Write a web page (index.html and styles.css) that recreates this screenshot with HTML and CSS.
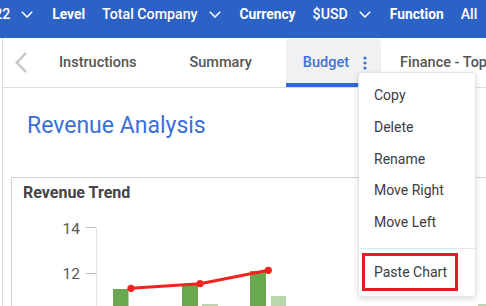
FILE: index.html
```html
<!DOCTYPE html>
<html lang="en">
<head>
<meta charset="utf-8">
<title>Revenue Analysis</title>
<link rel="stylesheet" href="styles.css">
</head>
<body>
<header class="topbar">
  <div class="filters">
    <span class="val">2022</span>
    <svg class="chev" width="12" height="7" viewBox="0 0 12 7"><polyline points="0.8,0.8 6,6 11.2,0.8" fill="none" stroke="#fff" stroke-width="1.5"/></svg>
    <span class="lbl">Level</span>
    <span class="val">Total Company</span>
    <svg class="chev" width="12" height="7" viewBox="0 0 12 7"><polyline points="0.8,0.8 6,6 11.2,0.8" fill="none" stroke="#fff" stroke-width="1.5"/></svg>
    <span class="lbl">Currency</span>
    <span class="val">$USD</span>
    <svg class="chev" width="12" height="7" viewBox="0 0 12 7"><polyline points="0.8,0.8 6,6 11.2,0.8" fill="none" stroke="#fff" stroke-width="1.5"/></svg>
    <span class="lbl">Function</span>
    <span class="val">All</span>
  </div>
</header>
<main class="workspace">
  <nav class="tabbar">
    <div class="scroll-left">
      <svg width="12" height="21" viewBox="0 0 12 21"><polyline points="11,1 1.8,10.5 11,20" fill="none" stroke="#cacaca" stroke-width="2.6"/></svg>
    </div>
    <div class="tab">Instructions</div>
    <div class="tab">Summary</div>
    <div class="tab tab-active">Budget
      <svg class="kebab" width="4" height="14" viewBox="0 0 4 14"><circle cx="2" cy="2" r="1.6" fill="#3c74da"/><circle cx="2" cy="7" r="1.6" fill="#3c74da"/><circle cx="2" cy="12" r="1.6" fill="#3c74da"/></svg>
    </div>
    <div class="tab tab-after-active">Finance - Top Line</div>
  </nav>
  <section class="content">
    <h1 class="page-title">Revenue Analysis</h1>
    <div class="card">
      <h2 class="card-title">Revenue Trend</h2>
      <svg class="chart" width="474" height="104" viewBox="12 202 474 104">
        <text x="80" y="234" class="axis-label" text-anchor="end">14</text>
        <text x="80" y="279" class="axis-label" text-anchor="end">12</text>
        <line x1="86" y1="227.5" x2="96" y2="227.5" stroke="#bdbdbd" stroke-width="1"/>
        <line x1="86" y1="273.5" x2="96" y2="273.5" stroke="#bdbdbd" stroke-width="1"/>
        <line x1="96.5" y1="227" x2="96.5" y2="306" stroke="#e4e4e4" stroke-width="1"/>
        <rect x="113" y="289" width="15.5" height="20" fill="#6aa84f"/>
        <rect x="182" y="285" width="16" height="24" fill="#6aa84f"/>
        <rect x="250" y="271" width="16" height="38" fill="#6aa84f"/>
        <rect x="202" y="304" width="16" height="5" fill="#b9d8aa"/>
        <rect x="271" y="296" width="15" height="13" fill="#b9d8aa"/>
        <rect x="478" y="304" width="10" height="5" fill="#b9d8aa"/>
        <polyline points="131,288.3 200,283.7 268.3,270.3" fill="none" stroke="#f2231d" stroke-width="3"/>
        <circle cx="131" cy="288.3" r="3.6" fill="#f2231d"/>
        <circle cx="200" cy="283.7" r="3.6" fill="#f2231d"/>
        <circle cx="268.3" cy="270.3" r="3.6" fill="#f2231d"/>
      </svg>
    </div>
  </section>
  <div class="menu">
    <div class="menu-item">Copy</div>
    <div class="menu-item">Delete</div>
    <div class="menu-item">Rename</div>
    <div class="menu-item">Move Right</div>
    <div class="menu-item">Move Left</div>
    <div class="menu-sep"></div>
    <div class="menu-item menu-item-highlight">Paste Chart</div>
  </div>
</main>
</body>
</html>
```
FILE: styles.css
```css
* { box-sizing: border-box; }
html, body { margin: 0; padding: 0; }
body {
  width: 486px;
  height: 306px;
  overflow: hidden;
  background: #fff;
  font-family: Roboto, "Liberation Sans", sans-serif;
}
.topbar {
  height: 38px;
  background: #2c62c5;
  color: #fff;
  overflow: hidden;
}
.filters {
  display: flex;
  align-items: center;
  height: 28px;
  margin-left: -22px;
  white-space: nowrap;
  font-size: 14.2px;
}
.filters .lbl { font-size: 13.8px; font-weight: 700; margin-left: 19px; margin-right: 17px; }
.filters .val { font-weight: 500; }
.filters .chev { margin-left: 11px; flex: none; }
.workspace {
  position: relative;
  margin-left: 2px;
  border-left: 1px solid #dcdcdc;
  height: 268px;
}
.tabbar {
  display: flex;
  height: 50px;
  border-bottom: 1px solid #dedede;
  white-space: nowrap;
}
.scroll-left {
  width: 39px;
  flex: none;
  display: flex;
  align-items: center;
  padding-left: 12px;
  padding-bottom: 1px;
}
.tab {
  display: flex;
  align-items: center;
  padding: 0 17px;
  font-size: 14.5px;
  font-weight: 500;
  color: #555;
  flex: none;
}
.tab + .tab { margin-left: 19px; }
.tab + .tab-active {
  margin-left: 17px;
  margin-top: 1px;
  padding-right: 9px;
  background: #f0f1f3;
  border-radius: 4px 4px 0 0;
  color: #3c74da;
  box-shadow: inset 0 -4px 0 #2f6bd6;
  padding-bottom: 1px;
}
.tab-active .kebab { margin-left: 14px; margin-right: 5px; }
.tab + .tab-after-active { margin-left: 2px; }
.content {
  padding-left: 8px;
}
.page-title {
  margin: 24px 0 0 16px;
  font-size: 23px;
  line-height: 28px;
  font-weight: 400;
  color: #3a70db;
}
.card {
  margin-top: 37px;
  margin-right: -20px;
  border: 1px solid #d3d3d3;
  border-bottom: none;
  height: 140px;
  padding: 6px 0 0 11px;
}
.card-title {
  margin: 0;
  font-size: 16px;
  line-height: 18px;
  font-weight: 700;
  color: #454545;
}
.chart {
  display: block;
  margin-left: -11px;
}
.axis-label {
  font-family: Roboto, "Liberation Sans", sans-serif;
  font-size: 15.5px;
  fill: #595959;
}
.menu {
  position: absolute;
  left: 355px;
  top: 34px;
  width: 118px;
  padding: 7px 0 5px;
  background: #fff;
  border: 1px solid #e2e4e8;
  border-radius: 4px;
  box-shadow: 0 2px 6px rgba(0, 0, 0, 0.14);
}
.menu-item {
  height: 31.75px;
  line-height: 31.75px;
  padding-left: 15px;
  font-size: 14px;
  color: #3d3d3d;
  white-space: nowrap;
}
.menu-sep {
  height: 1px;
  margin-top: 9px;
  background: #e4e6ea;
}
.menu-item-highlight {
  margin: 4px 0 0 3px;
  width: 96px;
  height: 38px;
  line-height: 32px;
  padding-left: 9px;
  border: 3px solid #e51c24;
}
```
